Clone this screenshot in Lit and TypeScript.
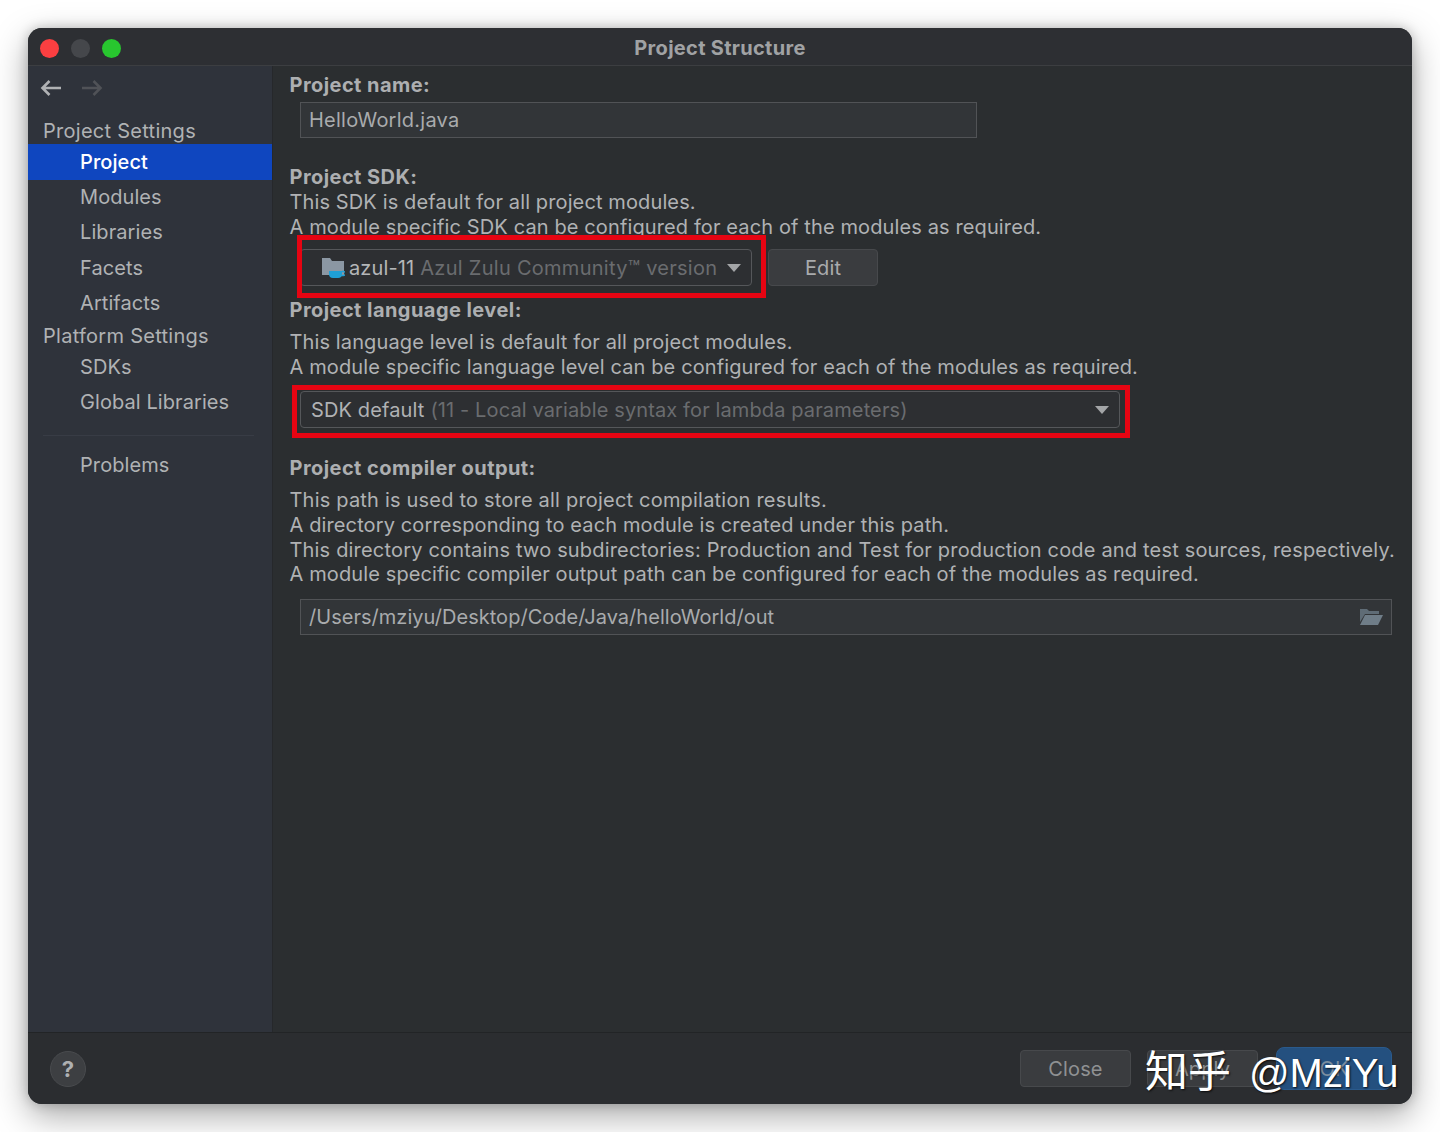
import { LitElement, html, css } from "lit";
import { customElement } from "lit/decorators.js";

@customElement("app-root")
export class AppRoot extends LitElement {
  static styles = css`
    :host { display: block; width: 1440px; height: 1132px; background: #fff; font-family: Inter, "Liberation Sans", sans-serif; font-size: 20px; letter-spacing: .12px; color: #b0b2b4; overflow: hidden; }
    * { box-sizing: border-box; }
    .page { padding: 28px 28px 0; }
    .win { position: relative; width: 1384px; height: 1076px; border-radius: 14px; background: #2b2e30; box-shadow: 0 12px 34px rgba(0,0,0,.34), 0 0 12px rgba(0,0,0,.22); display: flex; flex-direction: column; overflow: hidden; }
    .title { height: 38px; flex: none; display: flex; align-items: center; justify-content: center; position: relative; border-bottom: 1px solid #3c3e41; background: #2d2f33; font-weight: 700; letter-spacing: .3px; color: #a0a2a4; }
    .title span { margin-top: 2px; }
    .lights { position: absolute; left: 12px; top: 11px; display: flex; gap: 12px; }
    .lights i { width: 19px; height: 19px; border-radius: 50%; display: block; }
    .body { flex: 1; display: flex; min-height: 0; }
    .side { width: 245px; flex: none; background: #2f333b; border-right: 1px solid #26282b; padding-top: 11px; letter-spacing: .08px; }
    .nav { height: 22px; padding-left: 12px; display: flex; gap: 19px; align-items: center; margin-bottom: 12px; }
    .group { height: 33px; line-height: 40px; padding-left: 15px; letter-spacing: .27px; }
    .group.second { height: 28px; line-height: 28px; }
    .item { height: 35.4px; line-height: 34px; padding-left: 52px; }
    .item.sel { background: #0f46bf; color: #fff; font-weight: 500; height: 36px; line-height: 36px; }
    .sep { height: 1px; background: #383c45; margin: 15px 18px 11.500px 15px; }
    .main { flex: 1; padding: 6px 0 0 16.5px; position: relative; }
    .h { font-weight: 700; line-height: 26px; height: 26px; letter-spacing: .44px; color: #adafb1; }
    p { margin: 0; line-height: 24.6px; white-space: nowrap; }
    p.long { letter-spacing: .18px; }
    p.path-line { letter-spacing: .2px; }
    .ctl { margin-left: 10.5px; height: 37px; border: 1px solid #515356; background: #323538; display: flex; align-items: center; }
    .input { padding-left: 8px; color: #a9abad; }
    .name { width: 677px; height: 36px; margin-top: 4px; margin-bottom: 26px; letter-spacing: .25px; }
    .path { width: 1092px; height: 36px; margin-top: 12px; justify-content: space-between; padding-right: 8px; letter-spacing: .03px; }
    .combo { border-radius: 4px; background: #2d2f32; border-color: #55575a; }
    .sdk { width: 452px; padding: 0 10px 0 20px; }
    .lang { width: 820px; margin-top: 12px; margin-bottom: 27px; padding: 0 10px; }
    .fill { flex: 1; }
    .ver { margin-left: 4px; color: #b4b6b8; }
    .dim { color: #6a6c6f; margin-left: 6px; }
    .wide { letter-spacing: .28px; }
    .arrow { width: 0; height: 0; border-left: 7px solid transparent; border-right: 7px solid transparent; border-top: 8px solid #a3a5a7; }
    .row { display: flex; gap: 16px; margin-top: 10px; margin-bottom: 11px; }
    .btn { height: 37px; border: 1px solid #47494c; border-radius: 4px; background: #3a3c3f; display: flex; align-items: center; justify-content: center; color: #a9abad; }
    .edit { width: 110px; }
    .gap { margin-bottom: 7px; }
    .red { position: absolute; border: 5px solid #e60412; pointer-events: none; }
    .r1 { left: 24px; top: 169px; width: 469px; height: 63px; }
    .r2 { left: 19px; top: 319px; width: 838px; height: 53px; }
    .foot { height: 72px; flex: none; border-top: 1px solid #222426; background: #2b2d30; position: relative; display: flex; align-items: center; justify-content: space-between; padding: 0 20px 0 22px; }
    .help { width: 36px; height: 36px; border-radius: 50%; background: #3d3f42; border: 1px solid #494b4e; display: flex; align-items: center; justify-content: center; font-weight: 700; font-size: 22px; color: #aeb0b2; }
    .btns { display: flex; gap: 16px; align-items: center; }
    .f { width: 111px; color: #8f9193; }
    .ok { background: #24507f; border-color: #2a5a8c; width: 116px; height: 43px; border-radius: 8px; color: #7d8e9f; margin-left: 2px; }
    .mark { position: absolute; left: 1117px; top: 1014px; font-size: 43px; line-height: 60px; letter-spacing: 0; color: #fff; white-space: nowrap; font-family: "Liberation Sans", "Noto Sans CJK SC", sans-serif; text-shadow: 1px 1px 2px rgba(0,0,0,.8); }
    .mark b { font-weight: 400; margin-right: 18px; }
    .mark span { font-size: 40px; }
  `;

  render() {
    return html`<div class="page"><div class="win">
      <div class="title">
        <div class="lights"><i style="background:#fb3f41"></i><i style="background:#45474b"></i><i style="background:#28c62f"></i></div>
        <span>Project Structure</span>
      </div>
      <div class="body">
        <div class="side">
          <div class="nav">
            <svg width="22" height="18" viewBox="0 0 22 18" fill="none" stroke="#b0b2b4" stroke-width="2.6"><path d="M21 9H2M9.5 2 2.5 9l7 7"/></svg>
            <svg width="22" height="18" viewBox="0 0 22 18" fill="none" stroke="#505257" stroke-width="2.6"><path d="M1 9h19M12.5 2l7 7-7 7"/></svg>
          </div>
          <div class="group">Project Settings</div>
          <div class="item sel">Project</div>
          <div class="item">Modules</div>
          <div class="item">Libraries</div>
          <div class="item">Facets</div>
          <div class="item">Artifacts</div>
          <div class="group second">Platform Settings</div>
          <div class="item">SDKs</div>
          <div class="item">Global Libraries</div>
          <div class="sep"></div>
          <div class="item">Problems</div>
        </div>
        <div class="main">
          <div class="h">Project name:</div>
          <div class="ctl input name">HelloWorld.java</div>
          <div class="h">Project SDK:</div>
          <p>This SDK is default for all project modules.</p>
          <p>A module specific SDK can be configured for each of the modules as required.</p>
          <div class="row">
            <div class="ctl combo sdk">
              <svg width="24" height="24" viewBox="0 0 24 24"><path d="M1 2h8l2 3h12v14H1z" fill="#8b97a3"/><path d="M8 15h13v3a4 4 0 0 1-4 4h-5a4 4 0 0 1-4-4z" fill="#1f9fd6"/><path d="M21 15.500h1.500a2 2 0 0 1 0 4H20" fill="none" stroke="#1f9fd6" stroke-width="1.300"/></svg>
              <span class="ver">azul-11</span><span class="dim wide">Azul Zulu Community™ version</span>
              <span class="fill"></span><i class="arrow"></i>
            </div>
            <div class="btn edit">Edit</div>
          </div>
          <div class="h gap">Project language level:</div>
          <p>This language level is default for all project modules.</p>
          <p>A module specific language level can be configured for each of the modules as required.</p>
          <div class="ctl combo lang">
            <span>SDK default</span><span class="dim">(11 - Local variable syntax for lambda parameters)</span>
            <span class="fill"></span><i class="arrow"></i>
          </div>
          <div class="h gap">Project compiler output:</div>
          <p class="path-line">This path is used to store all project compilation results.</p>
          <p>A directory corresponding to each module is created under this path.</p>
          <p class="long">This directory contains two subdirectories: Production and Test for production code and test sources, respectively.</p>
          <p>A module specific compiler output path can be configured for each of the modules as required.</p>
          <div class="ctl input path">
            <span>/Users/mziyu/Desktop/Code/Java/helloWorld/out</span>
            <svg width="24" height="18" viewBox="0 0 24 18"><path d="M1 1h7l2 2h10v3H6L1 14z" fill="#5f6c76"/><path d="M6 7h18l-5 10H1z" fill="#6f7d88"/></svg>
          </div>
          <div class="red r1"></div>
          <div class="red r2"></div>
        </div>
      </div>
      <div class="foot">
        <div class="help">?</div>
        <div class="btns">
          <div class="btn f">Close</div>
          <div class="btn f">Apply</div>
          <div class="btn f ok">OK</div>
        </div>
      </div>
      <div class="mark"><b>知乎</b><span>@MziYu</span></div>
    </div></div>`;
  }
}
